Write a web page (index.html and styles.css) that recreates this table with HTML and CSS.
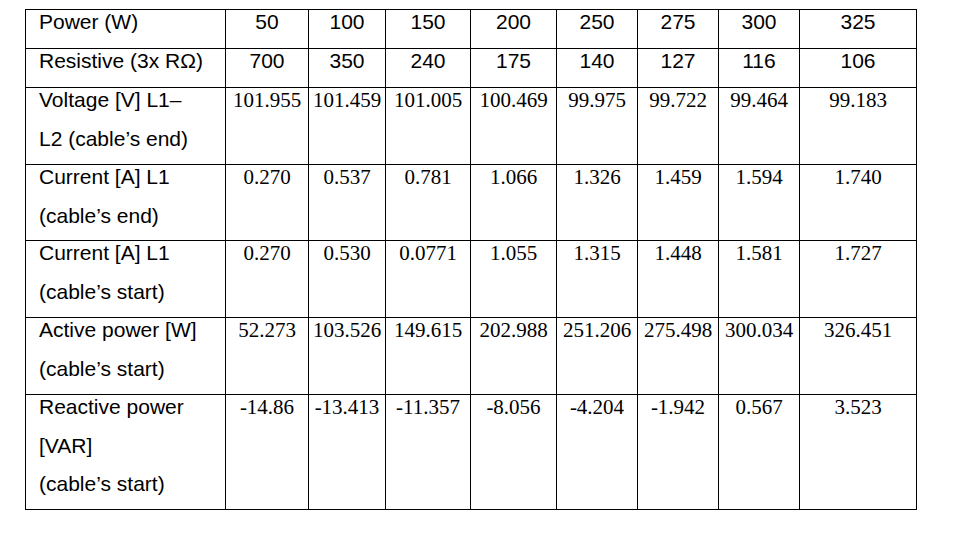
FILE: index.html
```html
<!DOCTYPE html>
<html lang="en">
<head>
  <meta charset="UTF-8">
  <meta name="viewport" content="width=device-width, initial-scale=1.0">
  <title>Cable test results</title>
  <link rel="stylesheet" href="styles.css">
</head>
<body>
<div class="sheet">
  <div class="cell label"><p>Power (W)</p></div>
  <div class="cell head"><p>50</p></div>
  <div class="cell head"><p>100</p></div>
  <div class="cell head"><p>150</p></div>
  <div class="cell head"><p>200</p></div>
  <div class="cell head"><p>250</p></div>
  <div class="cell head"><p>275</p></div>
  <div class="cell head"><p>300</p></div>
  <div class="cell head"><p>325</p></div>

  <div class="cell label"><p>Resistive (3x RΩ)</p></div>
  <div class="cell head"><p>700</p></div>
  <div class="cell head"><p>350</p></div>
  <div class="cell head"><p>240</p></div>
  <div class="cell head"><p>175</p></div>
  <div class="cell head"><p>140</p></div>
  <div class="cell head"><p>127</p></div>
  <div class="cell head"><p>116</p></div>
  <div class="cell head"><p>106</p></div>

  <div class="cell label"><p>Voltage [V] L1–<br>L2 (cable’s end)</p></div>
  <div class="cell num"><p>101.955</p></div>
  <div class="cell num"><p>101.459</p></div>
  <div class="cell num"><p>101.005</p></div>
  <div class="cell num"><p>100.469</p></div>
  <div class="cell num"><p>99.975</p></div>
  <div class="cell num"><p>99.722</p></div>
  <div class="cell num"><p>99.464</p></div>
  <div class="cell num"><p>99.183</p></div>

  <div class="cell label"><p>Current [A] L1<br>(cable’s end)</p></div>
  <div class="cell num"><p>0.270</p></div>
  <div class="cell num"><p>0.537</p></div>
  <div class="cell num"><p>0.781</p></div>
  <div class="cell num"><p>1.066</p></div>
  <div class="cell num"><p>1.326</p></div>
  <div class="cell num"><p>1.459</p></div>
  <div class="cell num"><p>1.594</p></div>
  <div class="cell num"><p>1.740</p></div>

  <div class="cell label"><p>Current [A] L1<br>(cable’s start)</p></div>
  <div class="cell num"><p>0.270</p></div>
  <div class="cell num"><p>0.530</p></div>
  <div class="cell num"><p>0.0771</p></div>
  <div class="cell num"><p>1.055</p></div>
  <div class="cell num"><p>1.315</p></div>
  <div class="cell num"><p>1.448</p></div>
  <div class="cell num"><p>1.581</p></div>
  <div class="cell num"><p>1.727</p></div>

  <div class="cell label"><p>Active power [W]<br>(cable’s start)</p></div>
  <div class="cell num"><p>52.273</p></div>
  <div class="cell num"><p>103.526</p></div>
  <div class="cell num"><p>149.615</p></div>
  <div class="cell num"><p>202.988</p></div>
  <div class="cell num"><p>251.206</p></div>
  <div class="cell num"><p>275.498</p></div>
  <div class="cell num"><p>300.034</p></div>
  <div class="cell num"><p>326.451</p></div>

  <div class="cell label"><p>Reactive power<br>[VAR]<br>(cable’s start)</p></div>
  <div class="cell num"><p>-14.86</p></div>
  <div class="cell num"><p>-13.413</p></div>
  <div class="cell num"><p>-11.357</p></div>
  <div class="cell num"><p>-8.056</p></div>
  <div class="cell num"><p>-4.204</p></div>
  <div class="cell num"><p>-1.942</p></div>
  <div class="cell num"><p>0.567</p></div>
  <div class="cell num"><p>3.523</p></div>
</div>
</body>
</html>
```

FILE: styles.css
```css
* { margin: 0; padding: 0; box-sizing: border-box; }

body {
  background: #fff;
  color: #000;
  font-family: 'Liberation Sans', Arial, sans-serif;
  font-size: 21px;
  padding: 9px 0 0 25px;
}

/* black background + 1px gaps draw the table rules */
.sheet {
  display: grid;
  grid-template-columns: 199px 82px 76px 84px 85px 80px 80px 80px 116px;
  grid-template-rows: 38px 38px 76px 75px 76px 76px 114px;
  gap: 1px;
  padding: 1px;
  background: #000;
  width: max-content;
}

.cell {
  background: #fff;
  line-height: 38.5px;
  overflow: hidden;
  white-space: nowrap;
}
.cell p { margin-top: -7px; }

.label { padding: 0 13px; }

.head { text-align: center; }

.num {
  text-align: center;
  font-family: 'Liberation Serif', 'Times New Roman', serif;
}
```
